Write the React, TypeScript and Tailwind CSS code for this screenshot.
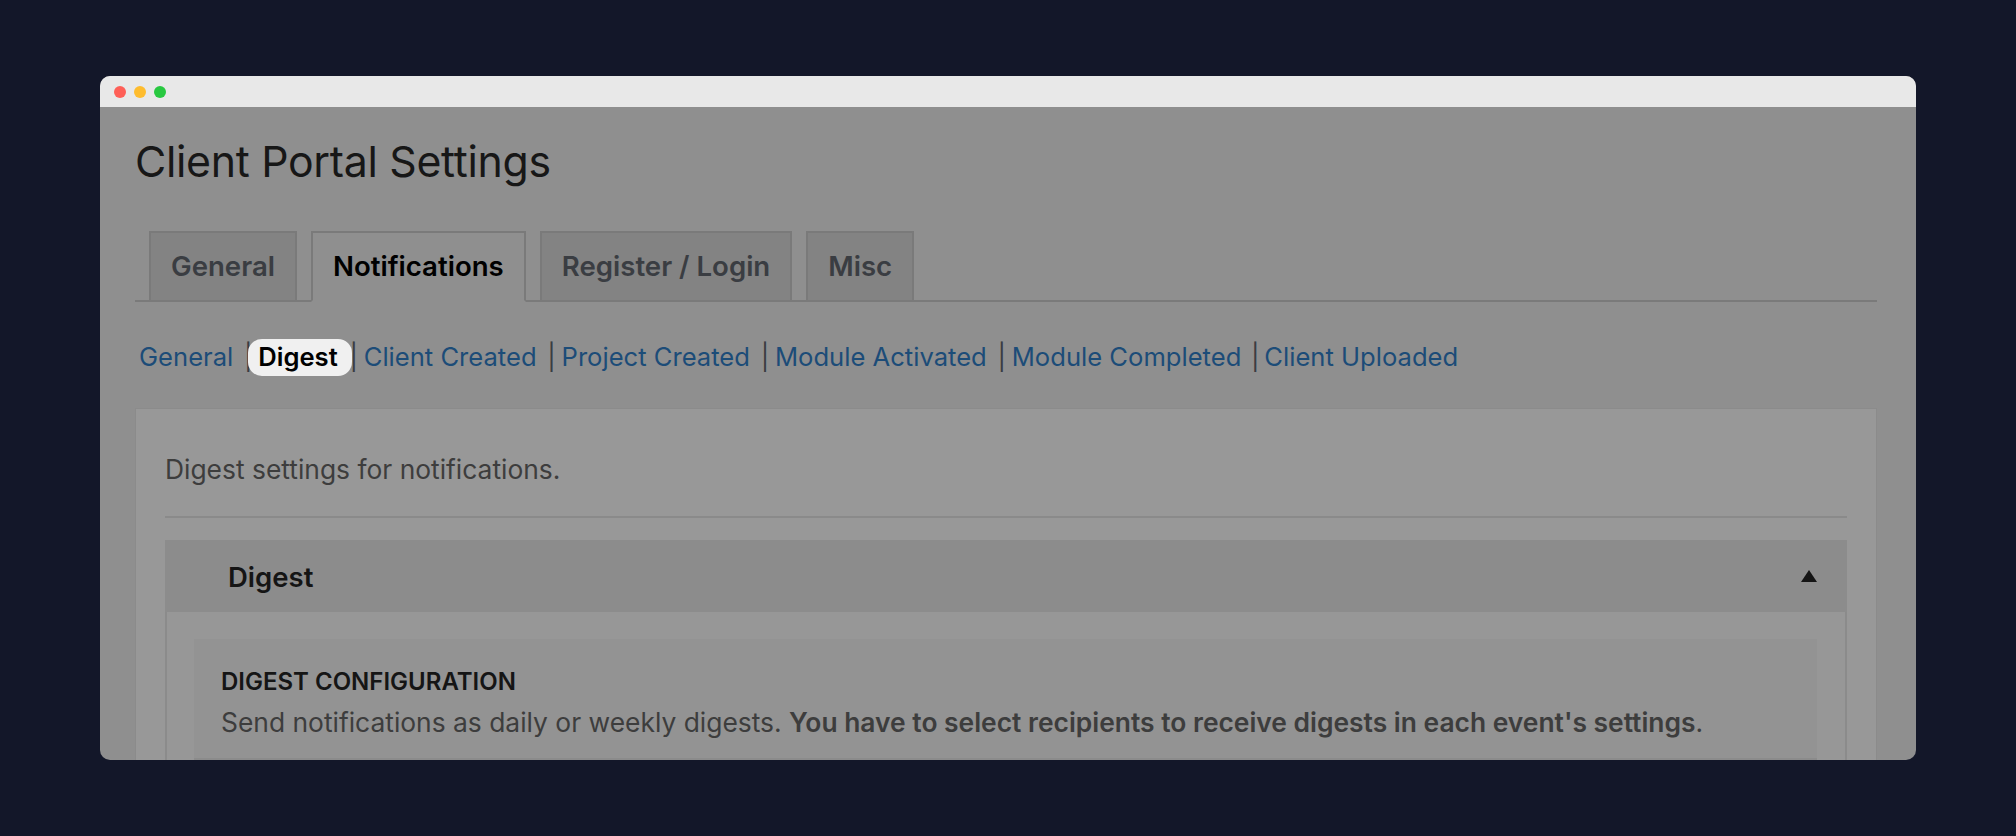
import React from "react";

const tabs = [
  { label: "General", active: false },
  { label: "Notifications", active: true },
  { label: "Register / Login", active: false },
  { label: "Misc", active: false },
];

const Sep = ({ className = "" }: { className?: string }) => (
  <span className={"w-[2px] flex justify-center overflow-visible text-[#3a3d42] " + className}>|</span>
);

export default function App() {
  return (
    <div
      className="min-h-[836px] bg-[#131729] pt-[76px] px-[100px]"
      style={{ fontFamily: "Inter, 'Noto Sans', sans-serif" }}
    >
      <div className="h-[684px] rounded-[10px] overflow-hidden bg-[#8f8f8f] flex flex-col">
        <div className="h-[31px] shrink-0 bg-[#e8e8e8] flex items-center pl-[14px] gap-[8px]">
          <span className="w-[12px] h-[12px] rounded-full bg-[#fe5f57]" />
          <span className="w-[12px] h-[12px] rounded-full bg-[#febc2e]" />
          <span className="w-[12px] h-[12px] rounded-full bg-[#28c840]" />
        </div>
        <div className="flex-1 overflow-hidden pl-[35px] pr-[39px]">
          <h1 className="mt-[30px] text-[42.8px] leading-[50px] font-normal text-[#171717] tracking-[-0.3px]">
            Client Portal Settings
          </h1>
          <div className="mt-[44px] flex gap-[14px] pl-[14px] border-b-2 border-[#7a7a7a]">
            {tabs.map((t) =>
              t.active ? (
                <div
                  key={t.label}
                  className="relative -mb-[2px] h-[71px] px-[20px] flex items-center bg-[#8f8f8f] border-2 border-[#7a7a7a] border-b-[#8f8f8f] text-[27.6px] font-semibold text-black"
                >
                  {t.label}
                </div>
              ) : (
                <div
                  key={t.label}
                  className="h-[69px] px-[20px] flex items-center bg-[#838383] border-2 border-b-0 border-[#7a7a7a] text-[27.6px] font-semibold text-[#3a3d42]"
                >
                  {t.label}
                </div>
              )
            )}
          </div>
          <div className="mt-[31px] h-[48px] flex items-center text-[25.6px] text-[#1c4c78]">
            <span className="ml-[4px]">General</span>
            <Sep className="ml-[14px]" />
            <span className="relative -ml-[1px] h-[37px] pl-[10px] pr-[14px] flex items-center rounded-[14px] bg-[#f0f0f0] text-black font-semibold">
              Digest
            </span>
            <Sep className="ml-[1px]" />
            <span className="ml-[9px]">Client Created</span>
            <Sep className="ml-[14px]" />
            <span className="ml-[9px]">Project Created</span>
            <Sep className="ml-[14px]" />
            <span className="ml-[9px]">Module Activated</span>
            <Sep className="ml-[14px]" />
            <span className="ml-[9px]">Module Completed</span>
            <Sep className="ml-[13px]" />
            <span className="ml-[8px]">Client Uploaded</span>
          </div>
          <div className="mt-[27px] bg-[#989898] border border-[#8b8b8b] px-[29px] pt-[40px]">
            <p className="text-[26.4px] leading-[40px] text-[#3d3d3d]">Digest settings for notifications.</p>
            <div className="mt-[27px] h-[2px] bg-[#8a8a8a]" />
            <div className="mt-[22px]">
              <div className="h-[72px] bg-[#8c8c8c] flex items-center justify-between pl-[63px] pr-[30px]">
                <span className="pt-[4px] text-[27.5px] font-semibold text-[#151515]">Digest</span>
                <svg width="16" height="12" viewBox="0 0 16 12">
                  <path d="M8 0 L16 12 L0 12 Z" fill="#151515" />
                </svg>
              </div>
              <div className="border-x-2 border-[#8b8b8b] bg-[#979797] pl-[27px] pr-[28px] pt-[27px]">
                <div className="bg-[#939393] border-b-2 border-[#8b8b8b] pl-[27px] pt-[28px] pb-[18px]">
                  <div className="text-[24px] leading-[30px] font-semibold uppercase text-[#151515]">
                    Digest Configuration
                  </div>
                  <p className="mt-[7px] text-[26.4px] leading-[36px] text-[#3d3d3d]">
                    Send notifications as daily or weekly digests.{" "}
                    <strong className="font-semibold">
                      You have to select recipients to receive digests in each event's settings
                    </strong>
                    .
                  </p>
                </div>
              </div>
            </div>
          </div>
        </div>
      </div>
    </div>
  );
}
